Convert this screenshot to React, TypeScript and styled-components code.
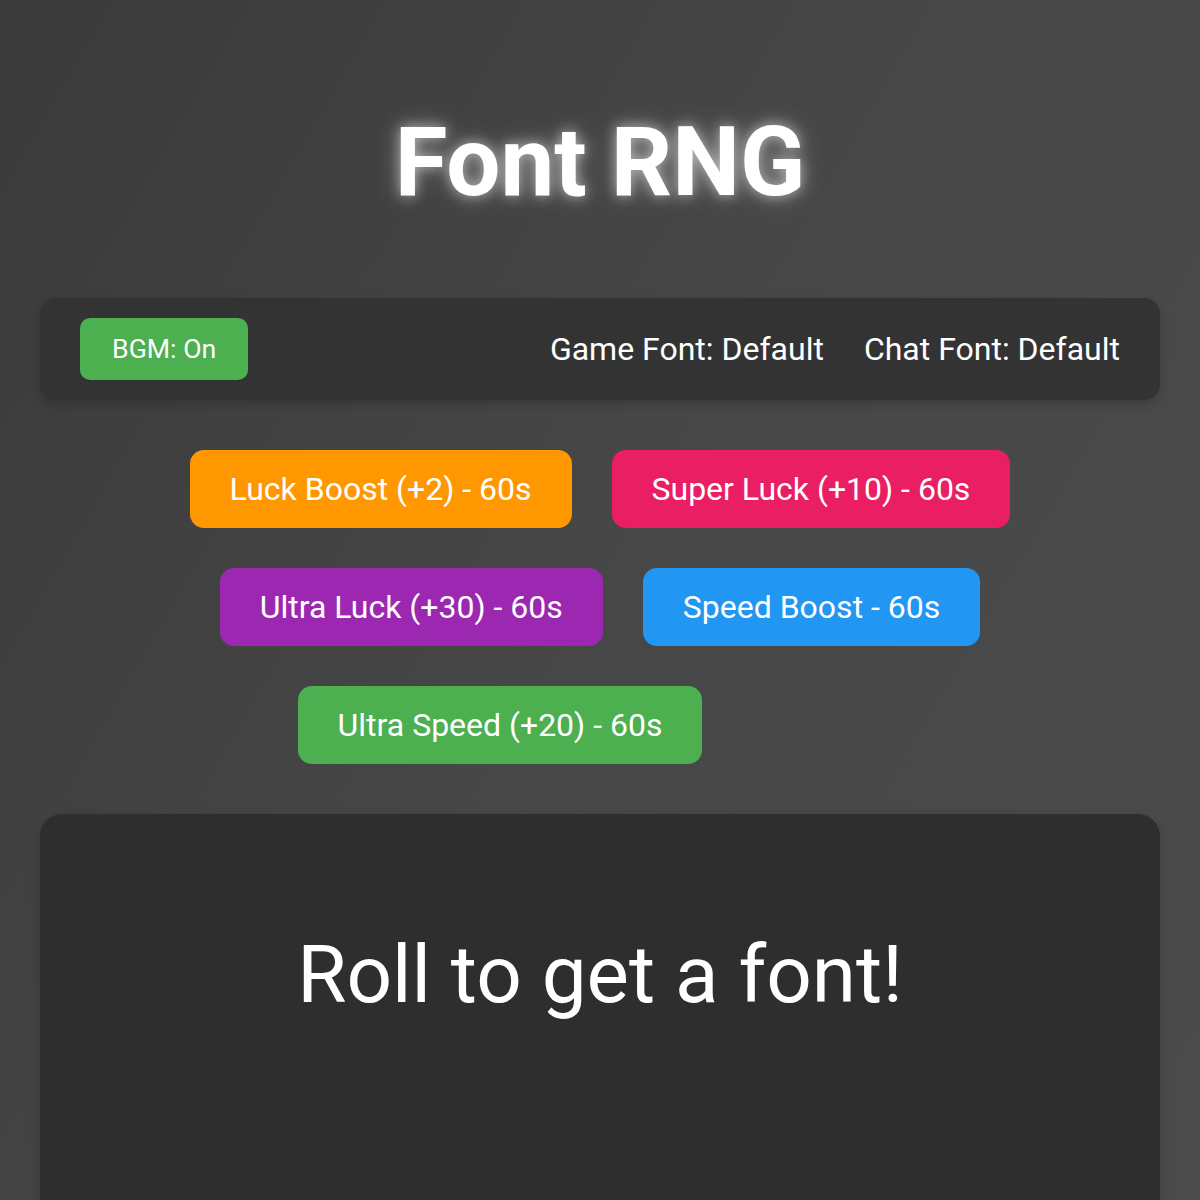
import React from "react";
import styled, { createGlobalStyle } from "styled-components";

const GlobalStyle = createGlobalStyle`
  html, body {
    margin: 0;
    padding: 0;
    min-height: 100%;
  }
  body {
    font-family: Roboto, "Liberation Sans", sans-serif;
    background: linear-gradient(120deg, #3a3a3a 0%, #474747 50%, #4b4b4b 100%);
    background-attachment: fixed;
    min-height: 1200px;
    color: #fff;
  }
`;

const Page = styled.div`
  padding: 106px 40px 0;
  display: flex;
  flex-direction: column;
  align-items: stretch;
  height: 1200px;
  box-sizing: border-box;
  overflow: hidden;
`;

const Title = styled.h1`
  margin: 0 0 80px;
  text-align: center;
  font-size: 96px;
  font-weight: 700;
  line-height: normal;
  color: #fff;
  text-shadow: 0 0 14px rgba(255, 255, 255, 0.6), 0 0 28px rgba(255, 255, 255, 0.25);
`;

const TopBar = styled.div`
  display: flex;
  align-items: center;
  justify-content: space-between;
  padding: 20px 40px;
  background: #333333;
  border-radius: 16px;
  box-shadow: 0 4px 10px rgba(0, 0, 0, 0.18);
`;

const BgmButton = styled.button`
  font-family: Roboto, "Liberation Sans", sans-serif;
  font-size: 26.7px;
  line-height: normal;
  padding: 15px 32px;
  border: none;
  border-radius: 10px;
  background: #4caf50;
  color: #fff;
`;

const FontInfo = styled.div`
  display: flex;
  gap: 40px;
  font-size: 32px;
  color: #fff;
`;

const BoostGrid = styled.div`
  display: flex;
  flex-wrap: wrap;
  justify-content: center;
  gap: 40px;
  margin: 50px 0;
`;

const BoostButton = styled.button<{ $color: string }>`
  font-family: Roboto, "Liberation Sans", sans-serif;
  font-size: 32px;
  line-height: normal;
  padding: 20px 40px;
  border: none;
  border-radius: 14px;
  background: ${(p) => p.$color};
  color: #fff;
`;

const HiddenSlot = styled.div`
  width: 160px;
  visibility: hidden;
`;

const ResultPanel = styled.div`
  flex: 1;
  background: #2e2e2e;
  border-radius: 22px 22px 0 0;
  padding-top: 114px;
  text-align: center;
  box-shadow: 0 4px 12px rgba(0, 0, 0, 0.15);
`;

const ResultText = styled.div`
  font-size: 80px;
  line-height: normal;
  color: #fff;
`;

const boosts = [
  { label: "Luck Boost (+2) - 60s", color: "#ff9800" },
  { label: "Super Luck (+10) - 60s", color: "#e91e63" },
  { label: "Ultra Luck (+30) - 60s", color: "#9c27b0" },
  { label: "Speed Boost - 60s", color: "#2196f3" },
  { label: "Ultra Speed (+20) - 60s", color: "#4caf50" },
];

export default function App() {
  return (
    <>
      <GlobalStyle />
      <Page>
        <Title>Font RNG</Title>
        <TopBar>
          <BgmButton>BGM: On</BgmButton>
          <FontInfo>
            <span>Game Font: Default</span>
            <span>Chat Font: Default</span>
          </FontInfo>
        </TopBar>
        <BoostGrid>
          {boosts.map((b) => (
            <BoostButton key={b.label} $color={b.color}>
              {b.label}
            </BoostButton>
          ))}
          <HiddenSlot />
        </BoostGrid>
        <ResultPanel>
          <ResultText>Roll to get a font!</ResultText>
        </ResultPanel>
      </Page>
    </>
  );
}
